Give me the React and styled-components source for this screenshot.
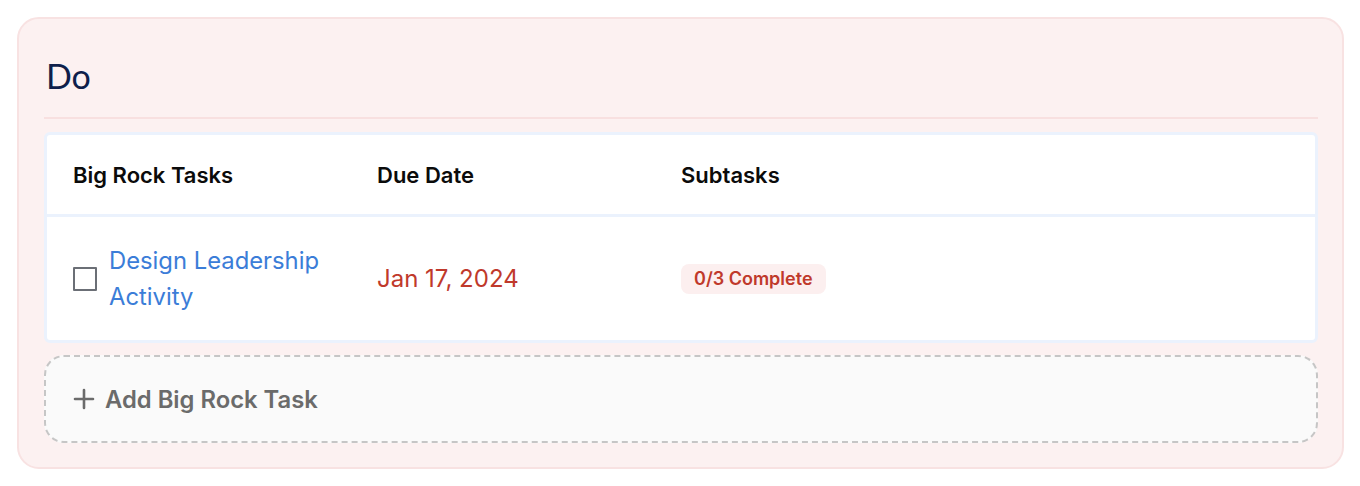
import React from "react";
import styled, { createGlobalStyle } from "styled-components";

const GlobalStyle = createGlobalStyle`
  body {
    margin: 0;
    background: #ffffff;
    font-family: Inter, "Liberation Sans", sans-serif;
  }
`;

const tasks = [
  {
    name: "Design Leadership Activity",
    due: "Jan 17, 2024",
    done: 0,
    total: 3,
  },
];

const App = () => {
  return (
    <>
      <GlobalStyle />
      <Card>
        <Header>
          <Title>Do</Title>
        </Header>
        <Table>
          <HeadRow>
            <HeadCell>Big Rock Tasks</HeadCell>
            <HeadCell>Due Date</HeadCell>
            <HeadCell>Subtasks</HeadCell>
          </HeadRow>
          {tasks.map((task, index) => (
            <Row key={index}>
              <TaskCell>
                <Checkbox type="checkbox" />
                <TaskLink href="#">{task.name}</TaskLink>
              </TaskCell>
              <DateCell>{task.due}</DateCell>
              <Cell>
                <Badge>
                  {task.done}/{task.total} Complete
                </Badge>
              </Cell>
            </Row>
          ))}
        </Table>
        <AddButton>
          <svg width="22" height="22" viewBox="0 0 22 22" fill="none">
            <path
              d="M11 2v18M2 11h18"
              stroke="currentColor"
              strokeWidth="2.6"
              strokeLinecap="round"
            />
          </svg>
          Add Big Rock Task
        </AddButton>
      </Card>
    </>
  );
};

const Card = styled.div`
  margin: 17px 16px 17px 17px;
  background: #fcf1f1;
  border: 2px solid #f8e2e2;
  border-radius: 22px;
  padding: 0 24px 24px 25px;
`;

const Header = styled.div`
  height: 100px;
  display: flex;
  align-items: center;
  padding: 14px 0 0 2px;
  border-bottom: 2px solid #f8e0e0;
  box-sizing: border-box;
`;

const Title = styled.h2`
  margin: 0;
  font-family: Lato, "Open Sans", sans-serif;
  font-weight: 400;
  font-size: 34px;
  color: #0f1f4b;
`;

const Table = styled.div`
  margin-top: 13px;
  background: #ffffff;
  border: 3px solid #ebf2fd;
  border-radius: 6px;
`;

const HeadRow = styled.div`
  display: grid;
  grid-template-columns: 304px 304px 1fr;
  height: 79px;
  align-items: center;
  padding-left: 26px;
  border-bottom: 3px solid #ebf2fd;
`;

const HeadCell = styled.div`
  font-size: 22px;
  font-weight: 600;
  color: #0b0b0b;
`;

const Row = styled.div`
  display: grid;
  grid-template-columns: 304px 304px 1fr;
  height: 123px;
  align-items: center;
  padding-left: 26px;
`;

const Cell = styled.div`
  display: flex;
  align-items: center;
`;

const TaskCell = styled(Cell)`
  gap: 12px;
  padding-right: 30px;
`;

const Checkbox = styled.input`
  appearance: none;
  margin: 0;
  flex: none;
  width: 24px;
  height: 24px;
  border: 2px solid #6b6f76;
  border-radius: 1px;
  background: #ffffff;
`;

const TaskLink = styled.a`
  font-size: 23.8px;
  line-height: 36px;
  color: #3b7dd8;
  text-decoration: none;
`;

const DateCell = styled(Cell)`
  font-size: 24px;
  color: #c0392b;
`;

const Badge = styled.span`
  display: inline-flex;
  align-items: center;
  height: 30px;
  padding: 0 13px;
  border-radius: 8px;
  background: #fcefef;
  color: #c0392b;
  font-size: 18px;
  font-weight: 600;
`;

const AddButton = styled.button`
  margin-top: 12px;
  width: 100%;
  height: 88px;
  display: flex;
  align-items: center;
  gap: 10px;
  padding: 0 0 0 27px;
  background: #fafafa;
  border: 2px dashed #c6c6c6;
  border-radius: 20px;
  font-family: Inter, "Liberation Sans", sans-serif;
  font-size: 23.8px;
  font-weight: 600;
  color: #6b6b6b;
  cursor: pointer;
`;

export default App;
